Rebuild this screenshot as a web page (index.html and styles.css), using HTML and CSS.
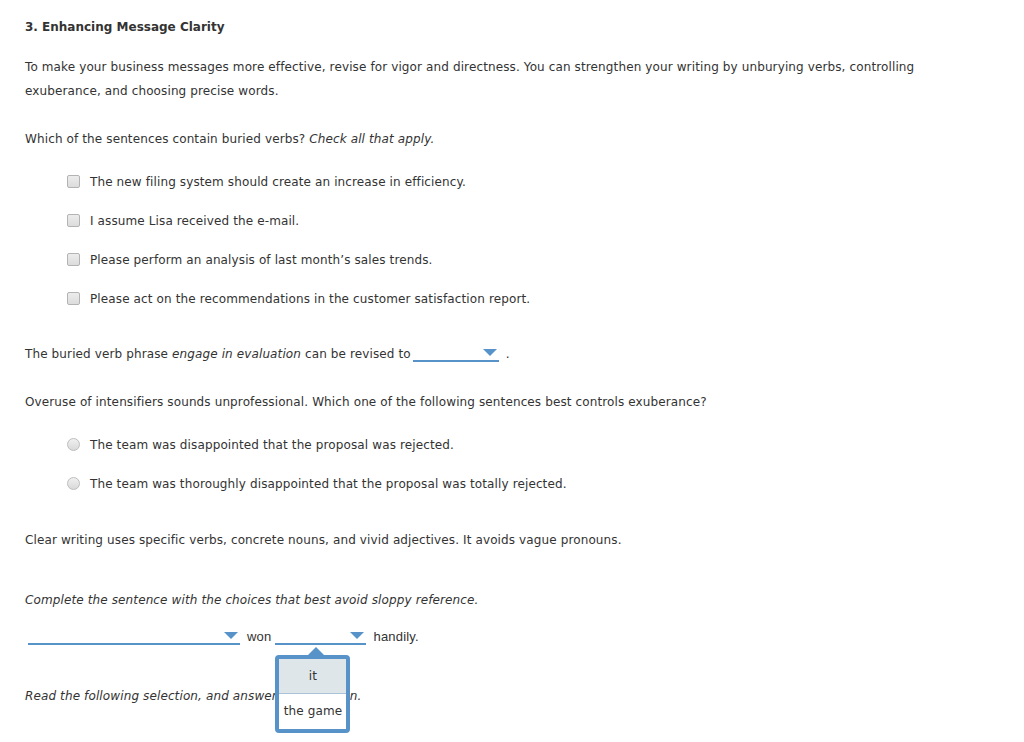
FILE: index.html
```html
<!DOCTYPE html>
<html>
<head>
<meta charset="utf-8">
<link rel="stylesheet" href="styles.css">
</head>
<body>
<div class="page">
  <h3 class="title">3. Enhancing Message Clarity</h3>
  <p class="para intro">To make your business messages more effective, revise for vigor and directness. You can strengthen your writing by unburying verbs, controlling exuberance, and choosing precise words.</p>
  <p class="para q1">Which of the sentences contain buried verbs? <em>Check all that apply.</em></p>
  <ul class="choices checks">
    <li class="choice"><span class="box"></span><span>The new filing system should create an increase in efficiency.</span></li>
    <li class="choice"><span class="box"></span><span>I assume Lisa received the e-mail.</span></li>
    <li class="choice"><span class="box"></span><span>Please perform an analysis of last month’s sales trends.</span></li>
    <li class="choice"><span class="box"></span><span>Please act on the recommendations in the customer satisfaction report.</span></li>
  </ul>
  <p class="para q2">The buried verb phrase <em>engage in evaluation</em> can be revised to <span class="drop d1"><span class="tri"></span></span> <span class="dot">.</span></p>
  <p class="para q3">Overuse of intensifiers sounds unprofessional. Which one of the following sentences best controls exuberance?</p>
  <ul class="choices radios">
    <li class="choice"><span class="radio"></span><span>The team was disappointed that the proposal was rejected.</span></li>
    <li class="choice"><span class="radio"></span><span>The team was thoroughly disappointed that the proposal was totally rejected.</span></li>
  </ul>
  <p class="para q4">Clear writing uses specific verbs, concrete nouns, and vivid adjectives. It avoids vague pronouns.</p>
  <p class="para q5"><em>Complete the sentence with the choices that best avoid sloppy reference.</em></p>
  <div class="fill">
    <span class="drop d2"><span class="tri"></span></span>
    <span class="word">won</span>
    <span class="drop d3"><span class="tri"></span>
      <div class="menu">
        <div class="menu-item sel">it</div>
        <div class="menu-item">the game</div>
      </div>
    </span>
    <span class="word">handily.</span>
  </div>
  <p class="para q6"><em>Read the following selection, and answer the question.</em></p>
</div>
</body>
</html>
```
FILE: styles.css
```css
* { box-sizing: border-box; }
html, body { min-height: 742px; }
body {
  margin: 0;
  background: #fff;
  color: #333;
  font-family: "DejaVu Sans", Verdana, sans-serif;
  font-size: 12px;
  letter-spacing: 0.12px;
}
.page {
  padding: 15px 0 60px 25px;
}
.title {
  margin: 0;
  font-size: 12px;
  font-weight: bold;
  line-height: 24px;
  letter-spacing: 0;
}
.para {
  margin: 0;
  line-height: 24px;
}
.intro { margin-top: 16px; max-width: 910px; }
.q1 { margin-top: 24px; }
.choices {
  list-style: none;
  margin: 19px 0 0 0;
  padding: 0 0 0 42px;
  display: flex;
  flex-direction: column;
  gap: 15px;
}
.choice {
  display: flex;
  align-items: center;
  gap: 10px;
  line-height: 24px;
}
.box {
  width: 13px;
  height: 13px;
  border: 1px solid #b3b3b3;
  border-radius: 2px;
  background: linear-gradient(#ececec, #dcdcdc);
  flex: none;
  margin-top: -2px;
}
.radio {
  width: 13px;
  height: 13px;
  border: 1px solid #bdbdbd;
  border-radius: 50%;
  background: linear-gradient(#f0f0f0, #d9d9d9);
  flex: none;
  margin-top: -2px;
}
.q2 { margin-top: 31px; }
.q3 { margin-top: 24px; }
.q4 { margin-top: 32px; }
.q5 { margin-top: 36px; }
.drop {
  display: inline-block;
  position: relative;
  height: 16px;
  border-bottom: 2px solid #5793c9;
  vertical-align: -4px;
}
.tri {
  position: absolute;
  right: 2px;
  top: 3px;
  width: 0;
  height: 0;
  border-left: 7px solid transparent;
  border-right: 7px solid transparent;
  border-top: 7px solid #5793c9;
}
.d1 { width: 86px; margin-left: -2px; }
.dot { margin-left: 3px; }
.fill {
  margin-top: 13px;
  padding-left: 3px;
  display: flex;
  align-items: flex-end;
  height: 24px;
  gap: 7px;
}
.fill .drop { vertical-align: baseline; margin-bottom: 4px; }
.d2 { width: 212px; }
.d3 { width: 91px; margin-left: -3px; }
.word {
  font-family: "Liberation Sans", Arial, sans-serif;
  font-size: 13px;
  line-height: 24px;
  letter-spacing: 0.2px;
}
.menu {
  position: absolute;
  left: 0;
  top: 26px;
  width: 75px;
  border: 4px solid #5793c9;
  border-radius: 4px;
  background: #fff;
  z-index: 2;
}
.menu::before {
  content: "";
  position: absolute;
  left: 29px;
  top: -12px;
  border-left: 8px solid transparent;
  border-right: 8px solid transparent;
  border-bottom: 8px solid #5793c9;
}
.menu-item {
  height: 35px;
  line-height: 35px;
  text-align: center;
  font-size: 12px;
  color: #333;
}
.menu-item.sel {
  background: #dfe6ea;
  border-bottom: 1px solid #a8c2d8;
}
.q6 { margin-top: 35px; }
```
